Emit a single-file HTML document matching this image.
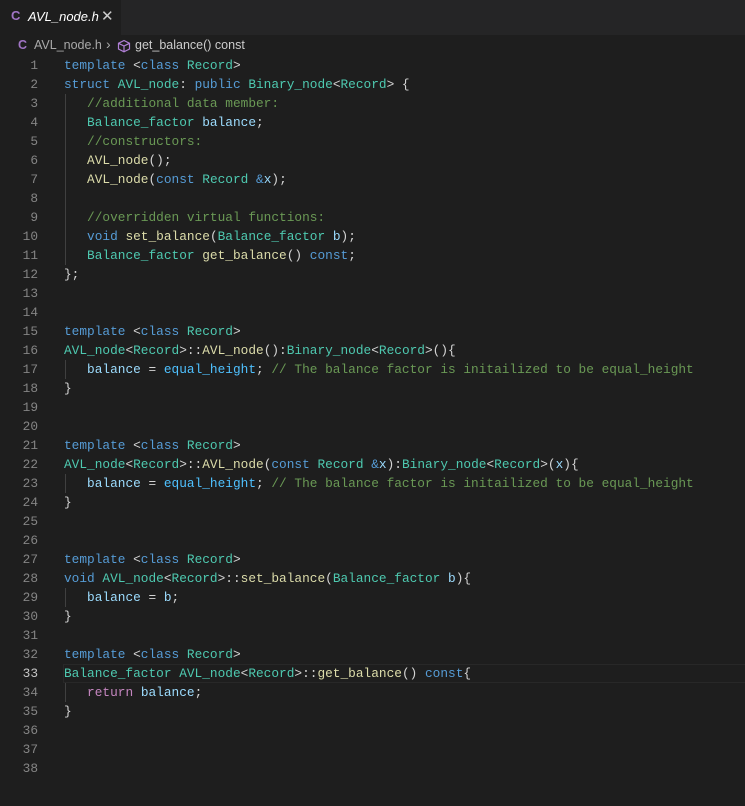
<!DOCTYPE html>
<html><head><meta charset="utf-8"><style>
body{margin:0;width:745px;height:806px;background:#1e1e1e;overflow:hidden;position:relative;font-family:"Liberation Sans",sans-serif}
.tabbar{position:absolute;left:0;top:0;width:745px;height:35px;background:#252526}
.tab{position:absolute;left:0;top:0;width:121px;height:35px;background:#1e1e1e;color:#fff;font-size:13px}
.tab .ci{position:absolute;left:11px;top:8px;color:#a074c4;font-weight:bold;font-size:13px}
.tab .nm{position:absolute;left:28px;top:9px;font-style:italic}
.tab .x{position:absolute;left:101px;top:7px;font-size:15px;color:#ccc}
.bc{position:absolute;left:0;top:38px;height:18px;font-size:12.5px;color:#a9a9a9;white-space:nowrap}
.bc span{position:absolute;top:0}
.code{position:absolute;left:0;top:56px;font-family:"Liberation Mono",monospace;font-size:12.8px;line-height:19px;color:#d4d4d4}
.l{position:relative;height:19px;white-space:pre}
.ln{position:absolute;left:0;width:38px;text-align:right;color:#858585}
.tx{position:absolute;left:64px}
.g{position:absolute;left:65px;top:0;width:1px;height:19px;background:#404040}
.cur{position:absolute;left:63px;top:0;width:690px;height:17px;border:1px solid #282828}
.k{color:#569cd6}.t{color:#4ec9b0}.f{color:#dcdcaa}.v{color:#9cdcfe}.c{color:#6a9955}.n{color:#4fc1ff}.p{color:#c586c0}
</style></head><body>
<div class="tabbar"><div class="tab"><span class="ci">C</span><span class="nm">AVL_node.h</span><span class="x">✕</span></div></div>
<div class="bc"><span style="left:18px;color:#a074c4;font-weight:bold">C</span><span style="left:34px">AVL_node.h</span><span style="left:106px;font-size:14px;top:-2px">›</span>
<svg style="position:absolute;left:117px;top:1px" width="14" height="14" viewBox="0 0 14 14"><path d="M7 1.5L12.5 4.3V10L7 12.8L1.5 10V4.3Z M1.5 4.3L7 7L12.5 4.3 M7 7V12.8" fill="none" stroke="#b180d7" stroke-width="1.2"/></svg>
<span style="left:135px;color:#ccc">get_balance() const</span></div>
<div class="code">
<div class="l"><span class="ln">1</span><span class="tx"><span class="k">template</span> &lt;<span class="k">class</span> <span class="t">Record</span>&gt;</span></div>
<div class="l"><span class="ln">2</span><span class="tx"><span class="k">struct</span> <span class="t">AVL_node</span>: <span class="k">public</span> <span class="t">Binary_node</span>&lt;<span class="t">Record</span>&gt; {</span></div>
<div class="l"><span class="ln">3</span><span class="g"></span><span class="tx">   <span class="c">//additional data member:</span></span></div>
<div class="l"><span class="ln">4</span><span class="g"></span><span class="tx">   <span class="t">Balance_factor</span> <span class="v">balance</span>;</span></div>
<div class="l"><span class="ln">5</span><span class="g"></span><span class="tx">   <span class="c">//constructors:</span></span></div>
<div class="l"><span class="ln">6</span><span class="g"></span><span class="tx">   <span class="f">AVL_node</span>();</span></div>
<div class="l"><span class="ln">7</span><span class="g"></span><span class="tx">   <span class="f">AVL_node</span>(<span class="k">const</span> <span class="t">Record</span> <span class="k">&amp;</span><span class="v">x</span>);</span></div>
<div class="l"><span class="ln">8</span><span class="g"></span></div>
<div class="l"><span class="ln">9</span><span class="g"></span><span class="tx">   <span class="c">//overridden virtual functions:</span></span></div>
<div class="l"><span class="ln">10</span><span class="g"></span><span class="tx">   <span class="k">void</span> <span class="f">set_balance</span>(<span class="t">Balance_factor</span> <span class="v">b</span>);</span></div>
<div class="l"><span class="ln">11</span><span class="g"></span><span class="tx">   <span class="t">Balance_factor</span> <span class="f">get_balance</span>() <span class="k">const</span>;</span></div>
<div class="l"><span class="ln">12</span><span class="tx">};</span></div>
<div class="l"><span class="ln">13</span></div>
<div class="l"><span class="ln">14</span></div>
<div class="l"><span class="ln">15</span><span class="tx"><span class="k">template</span> &lt;<span class="k">class</span> <span class="t">Record</span>&gt;</span></div>
<div class="l"><span class="ln">16</span><span class="tx"><span class="t">AVL_node</span>&lt;<span class="t">Record</span>&gt;::<span class="f">AVL_node</span>():<span class="t">Binary_node</span>&lt;<span class="t">Record</span>&gt;(){</span></div>
<div class="l"><span class="ln">17</span><span class="g"></span><span class="tx">   <span class="v">balance</span> = <span class="n">equal_height</span>; <span class="c">// The balance factor is initailized to be equal_height</span></span></div>
<div class="l"><span class="ln">18</span><span class="tx">}</span></div>
<div class="l"><span class="ln">19</span></div>
<div class="l"><span class="ln">20</span></div>
<div class="l"><span class="ln">21</span><span class="tx"><span class="k">template</span> &lt;<span class="k">class</span> <span class="t">Record</span>&gt;</span></div>
<div class="l"><span class="ln">22</span><span class="tx"><span class="t">AVL_node</span>&lt;<span class="t">Record</span>&gt;::<span class="f">AVL_node</span>(<span class="k">const</span> <span class="t">Record</span> <span class="k">&amp;</span><span class="v">x</span>):<span class="t">Binary_node</span>&lt;<span class="t">Record</span>&gt;(<span class="v">x</span>){</span></div>
<div class="l"><span class="ln">23</span><span class="g"></span><span class="tx">   <span class="v">balance</span> = <span class="n">equal_height</span>; <span class="c">// The balance factor is initailized to be equal_height</span></span></div>
<div class="l"><span class="ln">24</span><span class="tx">}</span></div>
<div class="l"><span class="ln">25</span></div>
<div class="l"><span class="ln">26</span></div>
<div class="l"><span class="ln">27</span><span class="tx"><span class="k">template</span> &lt;<span class="k">class</span> <span class="t">Record</span>&gt;</span></div>
<div class="l"><span class="ln">28</span><span class="tx"><span class="k">void</span> <span class="t">AVL_node</span>&lt;<span class="t">Record</span>&gt;::<span class="f">set_balance</span>(<span class="t">Balance_factor</span> <span class="v">b</span>){</span></div>
<div class="l"><span class="ln">29</span><span class="g"></span><span class="tx">   <span class="v">balance</span> = <span class="v">b</span>;</span></div>
<div class="l"><span class="ln">30</span><span class="tx">}</span></div>
<div class="l"><span class="ln">31</span></div>
<div class="l"><span class="ln">32</span><span class="tx"><span class="k">template</span> &lt;<span class="k">class</span> <span class="t">Record</span>&gt;</span></div>
<div class="l"><span class="cur"></span><span class="ln" style="color:#c6c6c6">33</span><span class="tx"><span class="t">Balance_factor</span> <span class="t">AVL_node</span>&lt;<span class="t">Record</span>&gt;::<span class="f">get_balance</span>() <span class="k">const</span>{</span></div>
<div class="l"><span class="ln">34</span><span class="g"></span><span class="tx">   <span class="p">return</span> <span class="v">balance</span>;</span></div>
<div class="l"><span class="ln">35</span><span class="tx">}</span></div>
<div class="l"><span class="ln">36</span></div>
<div class="l"><span class="ln">37</span></div>
<div class="l"><span class="ln">38</span></div>
</div>
</body></html>
